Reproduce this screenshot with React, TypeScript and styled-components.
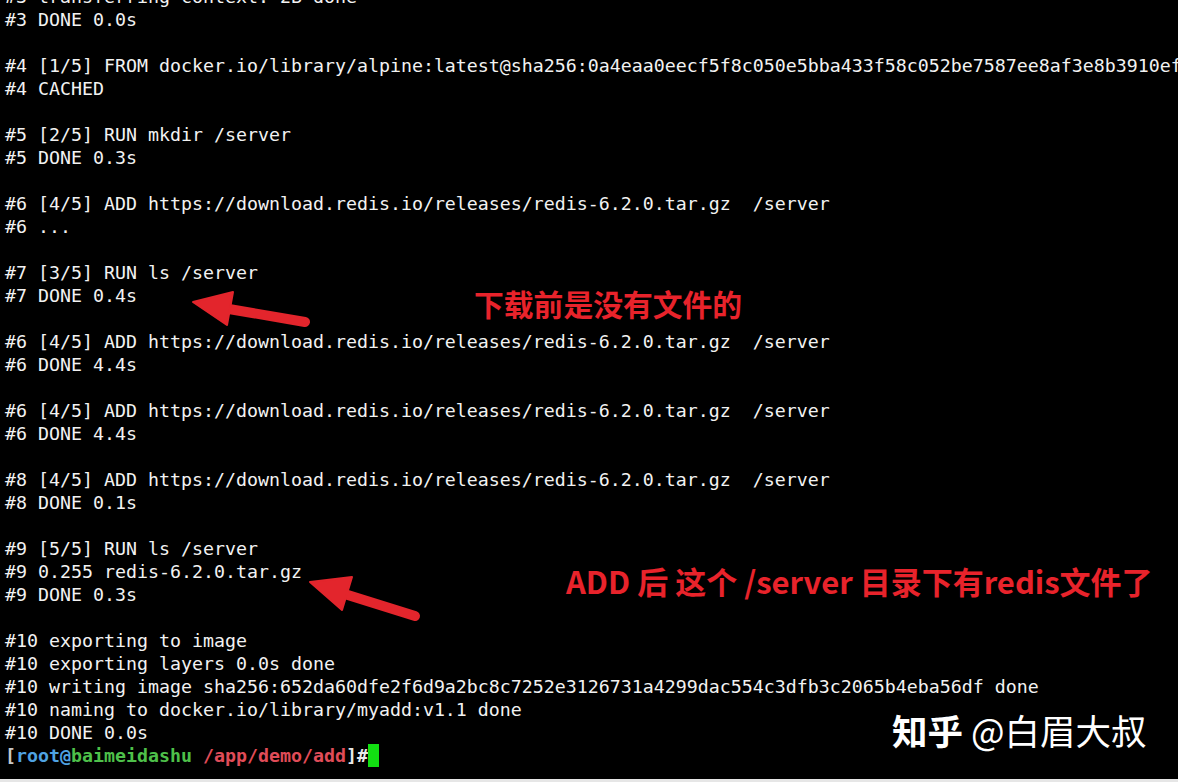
import styled, { createGlobalStyle } from 'styled-components';

const GlobalStyle = createGlobalStyle`
  html, body {
    margin: 0;
    padding: 0;
    background: #000;
  }
`;

const Screen = styled.div`
  position: relative;
  width: 1178px;
  height: 782px;
  overflow: hidden;
  background: #000;
  display: flex;
  flex-direction: column;
`;

const Terminal = styled.div`
  flex: 1;
  margin-top: -15px;
  padding-left: 5px;
  font-family: "DejaVu Sans Mono", monospace;
  font-size: 18.27px;
  color: #f2f2f2;
  white-space: pre;
`;

const Line = styled.div<{ $bold?: boolean }>`
  height: 23px;
  line-height: 23px;
  font-weight: ${(p) => (p.$bold ? 700 : 400)};
`;

const Seg = styled.span<{ $c: string }>`
  color: ${(p) => p.$c};
`;

const Cursor = styled.span`
  display: inline-block;
  width: 11px;
  height: 23px;
  vertical-align: top;
  background: #12e012;
`;

const BottomBar = styled.div`
  height: 3px;
  background: #e6e6e6;
`;

const Note = styled.div<{ $x: number; $y: number; $size: number }>`
  position: absolute;
  left: ${(p) => p.$x}px;
  top: ${(p) => p.$y}px;
  font-family: "Noto Sans CJK SC", "Noto Sans", sans-serif;
  font-weight: 700;
  font-size: ${(p) => p.$size}px;
  line-height: 1;
  color: #e8232b;
  white-space: nowrap;
`;

const Watermark = styled.div`
  position: absolute;
  left: 892px;
  top: 712px;
  font-family: "Noto Sans CJK SC", sans-serif;
  font-size: 35.5px;
  line-height: 1;
  color: #fff;
  white-space: nowrap;

  b {
    font-weight: 700;
  }
`;

const ArrowLayer = styled.svg`
  position: absolute;
  left: 0;
  top: 0;
  pointer-events: none;
`;

const lines = [
  '#3 transferring context: 2B done',
  '#3 DONE 0.0s',
  '',
  '#4 [1/5] FROM docker.io/library/alpine:latest@sha256:0a4eaa0eecf5f8c050e5bba433f58c052be7587ee8af3e8b3910ef',
  '#4 CACHED',
  '',
  '#5 [2/5] RUN mkdir /server',
  '#5 DONE 0.3s',
  '',
  '#6 [4/5] ADD https://download.redis.io/releases/redis-6.2.0.tar.gz  /server',
  '#6 ...',
  '',
  '#7 [3/5] RUN ls /server',
  '#7 DONE 0.4s',
  '',
  '#6 [4/5] ADD https://download.redis.io/releases/redis-6.2.0.tar.gz  /server',
  '#6 DONE 4.4s',
  '',
  '#6 [4/5] ADD https://download.redis.io/releases/redis-6.2.0.tar.gz  /server',
  '#6 DONE 4.4s',
  '',
  '#8 [4/5] ADD https://download.redis.io/releases/redis-6.2.0.tar.gz  /server',
  '#8 DONE 0.1s',
  '',
  '#9 [5/5] RUN ls /server',
  '#9 0.255 redis-6.2.0.tar.gz',
  '#9 DONE 0.3s',
  '',
  '#10 exporting to image',
  '#10 exporting layers 0.0s done',
  '#10 writing image sha256:652da60dfe2f6d9a2bc8c7252e3126731a4299dac554c3dfb3c2065b4eba56df done',
  '#10 naming to docker.io/library/myadd:v1.1 done',
  '#10 DONE 0.0s',
];

const Arrow = ({ tip, c1, c2, tail }: { tip: [number, number]; c1: [number, number]; c2: [number, number]; tail: [number, number] }) => {
  const mid: [number, number] = [(c1[0] + c2[0]) / 2, (c1[1] + c2[1]) / 2];
  return (
    <g fill="#e3252c" stroke="#e3252c">
      <line x1={mid[0] - 4} y1={mid[1]} x2={tail[0]} y2={tail[1]} strokeWidth={10} strokeLinecap="round" />
      <polygon points={`${tip[0]},${tip[1]} ${c1[0]},${c1[1]} ${c2[0]},${c2[1]}`} strokeWidth={2} strokeLinejoin="round" />
    </g>
  );
};

export default function App() {
  return (
    <>
      <GlobalStyle />
      <Screen>
        <Terminal>
          {lines.map((l, i) => (
            <Line key={i}>{l}</Line>
          ))}
          <Line $bold>
            <Seg $c="#c8c8c8">[</Seg>
            <Seg $c="#4fa2e2">root@</Seg>
            <Seg $c="#4ec04a">baimeidashu</Seg>
            <Seg $c="#e04c58"> /app/demo/add</Seg>
            <Seg $c="#e8e8e8">]#</Seg>
            <Cursor />
          </Line>
        </Terminal>
        <BottomBar />

        <ArrowLayer width={1178} height={782}>
          <Arrow tip={[193, 302]} c1={[233, 292]} c2={[227, 325]} tail={[305, 322]} />
          <Arrow tip={[310, 582]} c1={[352, 577]} c2={[342, 610]} tail={[415, 616]} />
        </ArrowLayer>

        <Note $x={474} $y={289} $size={29.8}>下载前是没有文件的</Note>
        <Note $x={566} $y={565} $size={31}>ADD 后 这个 /server 目录下有redis文件了</Note>
        <Watermark>
          <b>知乎</b> @白眉大叔
        </Watermark>
      </Screen>
    </>
  );
}
